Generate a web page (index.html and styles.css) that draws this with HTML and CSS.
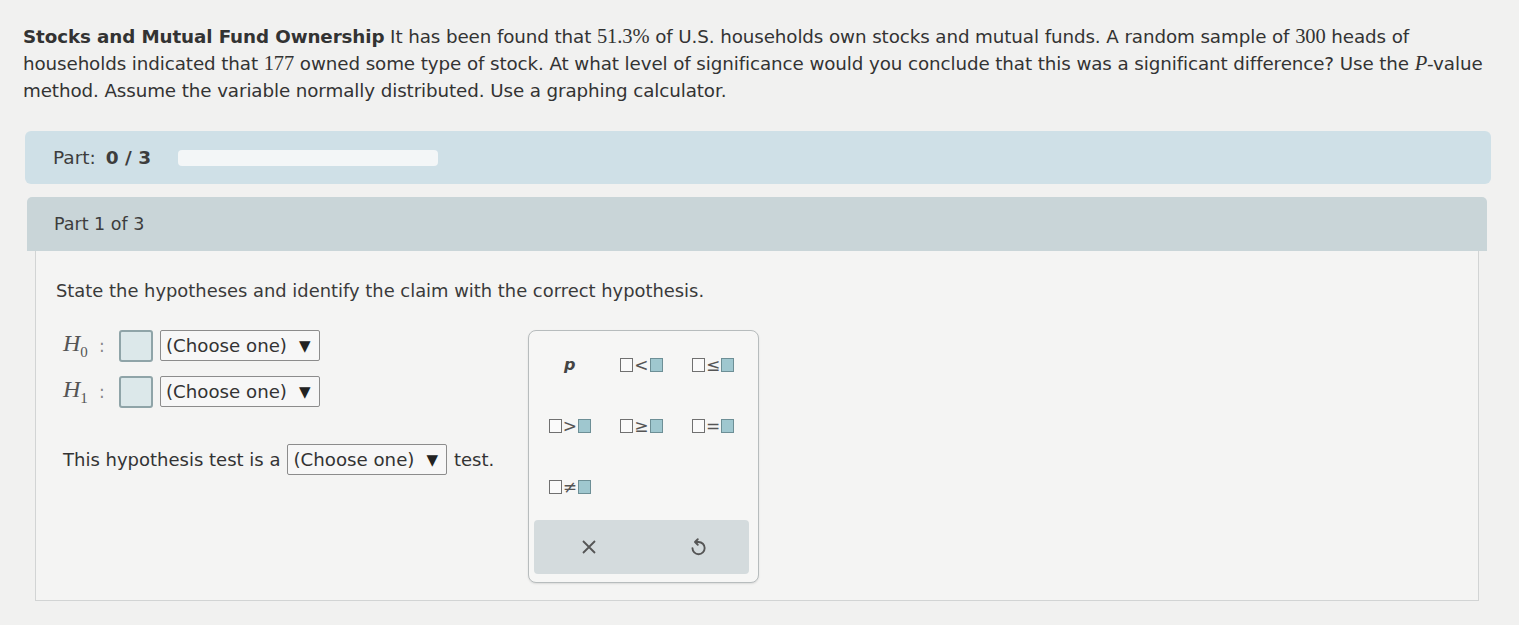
FILE: index.html
```html
<!DOCTYPE html>
<html>
<head>
<meta charset="utf-8">
<link rel="stylesheet" href="styles.css">
</head>
<body>
<div class="page">
  <p class="problem"><b>Stocks and Mutual Fund Ownership</b> It has been found that <span class="num">51.3%</span> of U.S. households own stocks and mutual funds. A random sample of <span class="num">300</span> heads of households indicated that <span class="num">177</span> owned some type of stock. At what level of significance would you conclude that this was a significant difference? Use the <i class="num">P</i>-value method. Assume the variable normally distributed. Use a graphing calculator.</p>

  <div class="partbar">
    <span class="partlabel">Part: <b>0 / 3</b></span>
    <span class="progress"></span>
  </div>

  <div class="panel">
    <div class="panelhead">Part 1 of 3</div>
    <div class="panelbody">
      <p class="instr">State the hypotheses and identify the claim with the correct hypothesis.</p>
      <div class="work">
        <div class="left">
          <div class="hrow">
            <span class="hlabel"><i>H</i><sub>0</sub></span><span class="colon">:</span>
            <span class="ibox"></span>
            <span class="select">(Choose one) <span class="tri">&#9660;</span></span>
          </div>
          <div class="hrow">
            <span class="hlabel"><i>H</i><sub>1</sub></span><span class="colon">:</span>
            <span class="ibox"></span>
            <span class="select">(Choose one) <span class="tri">&#9660;</span></span>
          </div>
          <div class="testrow">
            This hypothesis test is a <span class="select">(Choose one) <span class="tri">&#9660;</span></span> test.
          </div>
        </div>
        <div class="keypad">
          <div class="keys">
            <span class="key p">p</span>
            <span class="key"><span class="sq"></span>&lt;<span class="sq f"></span></span>
            <span class="key"><span class="sq"></span>&le;<span class="sq f"></span></span>
            <span class="key"><span class="sq"></span>&gt;<span class="sq f"></span></span>
            <span class="key"><span class="sq"></span>&ge;<span class="sq f"></span></span>
            <span class="key"><span class="sq"></span>=<span class="sq f"></span></span>
            <span class="key"><span class="sq"></span>&ne;<span class="sq f"></span></span>
          </div>
          <div class="kbar">
            <svg class="ico" width="16" height="16" viewBox="0 0 16 16"><path d="M2 2 L14 14 M14 2 L2 14" stroke="#555" stroke-width="1.8" fill="none"/></svg>
            <svg class="ico" width="18" height="20" viewBox="0 0 16 18"><path d="M3 10 A5.5 5.5 0 1 0 8.5 4.5 L5.5 4.5 M7.8 2 L5.3 4.5 L7.8 7" stroke="#555" stroke-width="1.7" fill="none" stroke-linecap="round" stroke-linejoin="round"/></svg>
          </div>
        </div>
      </div>
    </div>
  </div>
</div>
</body>
</html>
```

FILE: styles.css
```css
html, body {
  margin: 0;
  padding: 0;
  background: #f1f1f0;
}
body {
  font-family: "DejaVu Sans", Verdana, sans-serif;
  color: #3a3a3a;
}
.page {
  padding: 23px 30px 0 23px;
}
.problem {
  margin: 0;
  width: 1478px;
  font-size: 18.3px;
  line-height: 27px;
  letter-spacing: -0.1px;
  color: #333;
}
.num {
  font-family: "Liberation Serif", "Times New Roman", serif;
  font-size: 20.5px;
  line-height: 1;
}
.partbar {
  margin-top: 27px;
  height: 53px;
  width: 1466px;
  margin-left: 2px;
  background: #cfe0e7;
  border-radius: 6px;
  display: flex;
  align-items: center;
  padding-left: 28px;
  box-sizing: border-box;
}
.partlabel {
  font-size: 18.5px;
  color: #3d3d3d;
}
.partlabel b {
  margin-left: 4px;
}
.progress {
  margin-left: 27px;
  width: 260px;
  height: 16px;
  background: #f3f6f7;
  border-radius: 4px;
}
.panel {
  margin-top: 13px;
  margin-left: 4px;
  width: 1460px;
}
.panelhead {
  height: 54px;
  background: #c9d5d8;
  border-radius: 5px 5px 0 0;
  display: flex;
  align-items: center;
  padding-left: 27px;
  font-size: 17.5px;
  color: #3d3d3d;
}
.panelbody {
  margin: 0 8px;
  border: 1px solid #d2d4d4;
  border-top: none;
  background: #f4f4f3;
  height: 350px;
  padding: 29px 0 0 20px;
  box-sizing: border-box;
}
.instr {
  margin: 0;
  font-size: 17.9px;
  color: #3a3a3a;
}
.work {
  display: flex;
  margin-top: 29px;
}
.left {
  width: 465px;
  padding-left: 7px;
}
.hrow {
  display: flex;
  align-items: center;
  height: 31px;
  margin-bottom: 15px;
}
.hlabel {
  font-family: "Liberation Serif", "Times New Roman", serif;
  font-size: 24px;
  color: #555;
  width: 36px;
}
.hlabel sub {
  font-size: 15px;
  font-style: normal;
  vertical-align: -6px;
}
.colon {
  color: #888;
  font-size: 17px;
  width: 20px;
}
.ibox {
  width: 30px;
  height: 28px;
  border: 2px solid #8fa4a8;
  border-radius: 3px;
  background: #dce8ea;
  margin-right: 7px;
}
.select {
  display: inline-flex;
  align-items: center;
  height: 29px;
  padding: 0 8px 0 5px;
  border: 1.5px solid #8c8c8c;
  border-radius: 2px;
  background: #f7f7f7;
  font-size: 18.2px;
  color: #333;
}
.tri {
  font-size: 15px;
  margin-left: 12px;
  color: #222;
}
.testrow {
  margin-top: 37px;
  font-size: 18px;
  display: flex;
  align-items: center;
  gap: 7px;
  color: #333;
}
.keypad {
  width: 231px;
  height: 253px;
  border: 1.5px solid #b7bcbd;
  border-radius: 8px;
  background: #f6f6f5;
  box-sizing: border-box;
  padding: 0 9px 8px 5px;
  display: flex;
  flex-direction: column;
  box-shadow: 0 1px 2px rgba(0,0,0,0.1);
}
.keys {
  flex: 1;
  display: grid;
  grid-template-columns: repeat(3, 1fr);
  grid-auto-rows: 61px;
  padding-top: 3px;
}
.key {
  display: flex;
  align-items: center;
  justify-content: center;
  font-size: 17px;
  color: #555;
  gap: 1px;
}
.key.p {
  font-weight: bold;
  font-style: italic;
  font-size: 16px;
  color: #444;
}
.sq {
  display: inline-block;
  width: 11px;
  height: 12px;
  border: 1.4px solid #707070;
  background: #fafafa;
}
.sq.f {
  background: #9fc7cf;
  border-color: #6d8f96;
}
.kbar {
  height: 54px;
  background: #d4dbdd;
  border-radius: 4px;
  display: flex;
  align-items: center;
  justify-content: space-between;
  padding: 0 42px 0 47px;
}
.ico {
  display: block;
}
```
